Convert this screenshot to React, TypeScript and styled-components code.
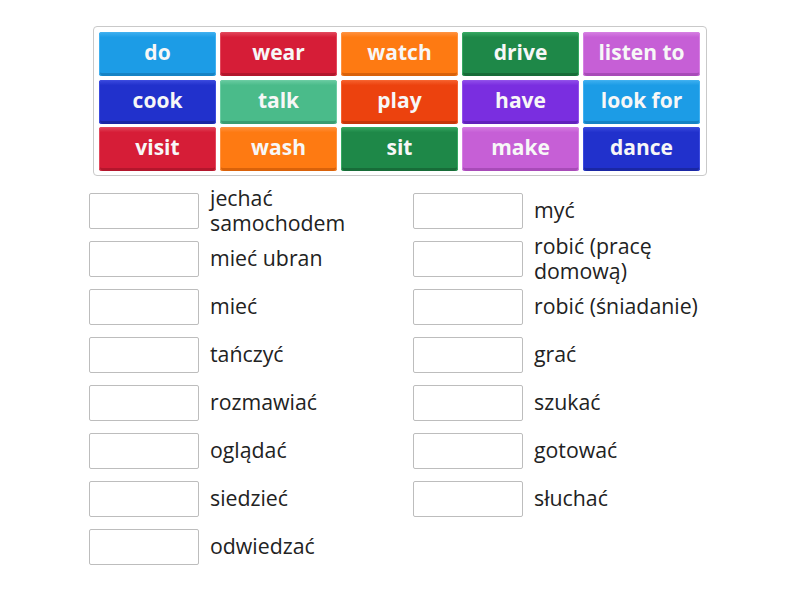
import styled, { createGlobalStyle } from "styled-components"

const GlobalStyle = createGlobalStyle`
    body {
        margin: 0;
        background: #ffffff;
        font-family: "Open Sans", "Noto Sans", sans-serif;
    }
`

const Page = styled.div`
    width: 800px;
    height: 600px;
    padding-top: 26px;
    box-sizing: border-box;
`

const Bank = styled.div`
    margin-left: 93px;
    width: 614px;
    box-sizing: border-box;
    border: 1px solid #c9c9c9;
    border-radius: 4px;
    padding: 5px 5px 4px 5px;
    display: grid;
    grid-template-columns: repeat(5, 117px);
    grid-auto-rows: 44px;
    column-gap: 4px;
    row-gap: 3.5px;
`

const Tile = styled.div<{ $base: string; $light: string; $dark: string }>`
    display: flex;
    align-items: center;
    justify-content: center;
    border-radius: 3px;
    background: linear-gradient(to bottom, ${p => p.$light} 0%, ${p => p.$base} 12%, ${p => p.$base} 100%);
    box-shadow:
        inset 0 1px 0 ${p => p.$light},
        inset 1px 0 0 ${p => p.$light},
        inset -1px 0 0 ${p => p.$light},
        inset 0 -3px 0 ${p => p.$dark};
    color: #f7f7f7;
    font-weight: 700;
    font-size: 21px;
    padding-bottom: 4px;
    box-sizing: border-box;
`

const Targets = styled.div`
    margin-top: 17px;
    margin-left: 89px;
    display: grid;
    grid-template-columns: 324px 324px;
    align-items: start;
`

const Column = styled.div`
    display: flex;
    flex-direction: column;
    gap: 12px;
`

const Row = styled.div`
    display: flex;
    align-items: center;
    height: 36px;
    gap: 11px;
`

const Box = styled.div`
    width: 110px;
    height: 36px;
    box-sizing: border-box;
    border: 1px solid #bdbdbd;
    border-radius: 2px;
    background: #ffffff;
    flex-shrink: 0;
`

const Label = styled.span`
    font-size: 21.3px;
    line-height: 25px;
    color: #222222;
    max-width: 180px;
    padding-bottom: 3px;
`

const palette: Record<string, [string, string, string]> = {
    blue: ["#1c9ce6", "#3fb0f0", "#1683c4"],
    red: ["#d61d37", "#e2485c", "#b3162c"],
    orange: ["#fe7a12", "#ff9240", "#d9620a"],
    green: ["#1e8848", "#36a862", "#176c38"],
    pink: ["#c65fd6", "#d67fe2", "#a84bb8"],
    navy: ["#2131cc", "#3b4ade", "#1a27a4"],
    teal: ["#4abb8a", "#6acca2", "#3a9c72"],
    flame: ["#ec420e", "#f6622e", "#c6360a"],
    purple: ["#7a2ee0", "#9150ea", "#6222bc"],
}

const tiles: [string, string][] = [
    ["do", "blue"], ["wear", "red"], ["watch", "orange"], ["drive", "green"], ["listen to", "pink"],
    ["cook", "navy"], ["talk", "teal"], ["play", "flame"], ["have", "purple"], ["look for", "blue"],
    ["visit", "red"], ["wash", "orange"], ["sit", "green"], ["make", "pink"], ["dance", "navy"],
]

const leftLabels = [
    "jechać samochodem",
    "mieć ubran",
    "mieć",
    "tańczyć",
    "rozmawiać",
    "oglądać",
    "siedzieć",
    "odwiedzać",
]

const rightLabels = [
    "myć",
    "robić (pracę domową)",
    "robić (śniadanie)",
    "grać",
    "szukać",
    "gotować",
    "słuchać",
]

const App = () => {
    return (
        <Page>
            <GlobalStyle />
            <Bank>
                {tiles.map(([word, colour], index) => {
                    const [base, light, dark] = palette[colour]
                    return (
                        <Tile key={index} $base={base} $light={light} $dark={dark}>{word}</Tile>
                    )
                })}
            </Bank>
            <Targets>
                <Column>
                    {leftLabels.map((label, index) => (
                        <Row key={index}>
                            <Box />
                            <Label>{label}</Label>
                        </Row>
                    ))}
                </Column>
                <Column>
                    {rightLabels.map((label, index) => (
                        <Row key={index}>
                            <Box />
                            <Label>{label}</Label>
                        </Row>
                    ))}
                </Column>
            </Targets>
        </Page>
    )
}

export default App
